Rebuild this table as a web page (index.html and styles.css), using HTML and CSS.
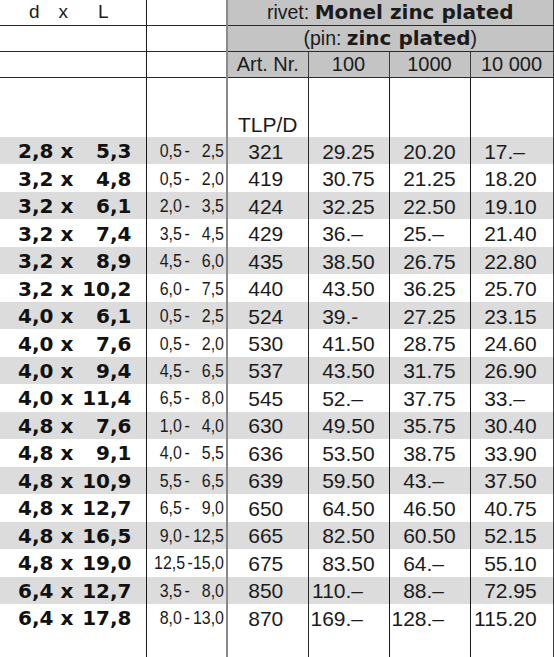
FILE: index.html
```html
<!DOCTYPE html>
<html>
<head>
<meta charset="utf-8">
<link rel="stylesheet" href="styles.css">
</head>
<body>
<table class="grid">
<colgroup>
<col class="w1"><col class="w2"><col class="w3"><col class="w4"><col class="w5"><col class="w6">
</colgroup>
<tr class="h1">
<td class="c1 dxl"><span>d</span><span class="gx">x</span><span class="gl">L</span></td>
<td class="c2"></td>
<td class="gray title" colspan="4">rivet: <b>Monel zinc plated</b></td>
</tr>
<tr class="h2">
<td class="c1"></td>
<td class="c2"></td>
<td class="gray sub" colspan="4">(pin: <b>zinc plated</b>)</td>
</tr>
<tr class="h3">
<td class="c1"></td>
<td class="c2"></td>
<td class="gray c3 hd">Art. Nr.</td>
<td class="gray c4 hd">100</td>
<td class="gray c5 hd">1000</td>
<td class="gray c6 hd">10 000</td>
</tr>
<tr class="tall">
<td class="c1"></td>
<td class="c2"></td>
<td class="c3 tlp">TLP/D</td>
<td class="c4"></td>
<td class="c5"></td>
<td class="c6"></td>
</tr>

<tr class="d z"><td class="c1"><div class="sz"><span>2,8 x</span><span>5,3</span></div></td><td class="c2"><div class="rg"><span>0,5</span><span class="ds">-</span><span class="hi">2,5</span></div></td><td class="c3 art">321</td><td class="c4 p"><span class="i">29</span>.25</td><td class="c5 p"><span class="i">20</span>.20</td><td class="c6 p"><span class="i">17</span>.–</td></tr>
<tr class="d"><td class="c1"><div class="sz"><span>3,2 x</span><span>4,8</span></div></td><td class="c2"><div class="rg"><span>0,5</span><span class="ds">-</span><span class="hi">2,0</span></div></td><td class="c3 art">419</td><td class="c4 p"><span class="i">30</span>.75</td><td class="c5 p"><span class="i">21</span>.25</td><td class="c6 p"><span class="i">18</span>.20</td></tr>
<tr class="d z"><td class="c1"><div class="sz"><span>3,2 x</span><span>6,1</span></div></td><td class="c2"><div class="rg"><span>2,0</span><span class="ds">-</span><span class="hi">3,5</span></div></td><td class="c3 art">424</td><td class="c4 p"><span class="i">32</span>.25</td><td class="c5 p"><span class="i">22</span>.50</td><td class="c6 p"><span class="i">19</span>.10</td></tr>
<tr class="d"><td class="c1"><div class="sz"><span>3,2 x</span><span>7,4</span></div></td><td class="c2"><div class="rg"><span>3,5</span><span class="ds">-</span><span class="hi">4,5</span></div></td><td class="c3 art">429</td><td class="c4 p"><span class="i">36</span>.–</td><td class="c5 p"><span class="i">25</span>.–</td><td class="c6 p"><span class="i">21</span>.40</td></tr>
<tr class="d z"><td class="c1"><div class="sz"><span>3,2 x</span><span>8,9</span></div></td><td class="c2"><div class="rg"><span>4,5</span><span class="ds">-</span><span class="hi">6,0</span></div></td><td class="c3 art">435</td><td class="c4 p"><span class="i">38</span>.50</td><td class="c5 p"><span class="i">26</span>.75</td><td class="c6 p"><span class="i">22</span>.80</td></tr>
<tr class="d"><td class="c1"><div class="sz"><span>3,2 x</span><span>10,2</span></div></td><td class="c2"><div class="rg"><span>6,0</span><span class="ds">-</span><span class="hi">7,5</span></div></td><td class="c3 art">440</td><td class="c4 p"><span class="i">43</span>.50</td><td class="c5 p"><span class="i">36</span>.25</td><td class="c6 p"><span class="i">25</span>.70</td></tr>
<tr class="d z"><td class="c1"><div class="sz"><span>4,0 x</span><span>6,1</span></div></td><td class="c2"><div class="rg"><span>0,5</span><span class="ds">-</span><span class="hi">2,5</span></div></td><td class="c3 art">524</td><td class="c4 p"><span class="i">39</span>.-</td><td class="c5 p"><span class="i">27</span>.25</td><td class="c6 p"><span class="i">23</span>.15</td></tr>
<tr class="d"><td class="c1"><div class="sz"><span>4,0 x</span><span>7,6</span></div></td><td class="c2"><div class="rg"><span>0,5</span><span class="ds">-</span><span class="hi">2,0</span></div></td><td class="c3 art">530</td><td class="c4 p"><span class="i">41</span>.50</td><td class="c5 p"><span class="i">28</span>.75</td><td class="c6 p"><span class="i">24</span>.60</td></tr>
<tr class="d z"><td class="c1"><div class="sz"><span>4,0 x</span><span>9,4</span></div></td><td class="c2"><div class="rg"><span>4,5</span><span class="ds">-</span><span class="hi">6,5</span></div></td><td class="c3 art">537</td><td class="c4 p"><span class="i">43</span>.50</td><td class="c5 p"><span class="i">31</span>.75</td><td class="c6 p"><span class="i">26</span>.90</td></tr>
<tr class="d"><td class="c1"><div class="sz"><span>4,0 x</span><span>11,4</span></div></td><td class="c2"><div class="rg"><span>6,5</span><span class="ds">-</span><span class="hi">8,0</span></div></td><td class="c3 art">545</td><td class="c4 p"><span class="i">52</span>.–</td><td class="c5 p"><span class="i">37</span>.75</td><td class="c6 p"><span class="i">33</span>.–</td></tr>
<tr class="d z"><td class="c1"><div class="sz"><span>4,8 x</span><span>7,6</span></div></td><td class="c2"><div class="rg"><span>1,0</span><span class="ds">-</span><span class="hi">4,0</span></div></td><td class="c3 art">630</td><td class="c4 p"><span class="i">49</span>.50</td><td class="c5 p"><span class="i">35</span>.75</td><td class="c6 p"><span class="i">30</span>.40</td></tr>
<tr class="d"><td class="c1"><div class="sz"><span>4,8 x</span><span>9,1</span></div></td><td class="c2"><div class="rg"><span>4,0</span><span class="ds">-</span><span class="hi">5,5</span></div></td><td class="c3 art">636</td><td class="c4 p"><span class="i">53</span>.50</td><td class="c5 p"><span class="i">38</span>.75</td><td class="c6 p"><span class="i">33</span>.90</td></tr>
<tr class="d z"><td class="c1"><div class="sz"><span>4,8 x</span><span>10,9</span></div></td><td class="c2"><div class="rg"><span>5,5</span><span class="ds">-</span><span class="hi">6,5</span></div></td><td class="c3 art">639</td><td class="c4 p"><span class="i">59</span>.50</td><td class="c5 p"><span class="i">43</span>.–</td><td class="c6 p"><span class="i">37</span>.50</td></tr>
<tr class="d"><td class="c1"><div class="sz"><span>4,8 x</span><span>12,7</span></div></td><td class="c2"><div class="rg"><span>6,5</span><span class="ds">-</span><span class="hi">9,0</span></div></td><td class="c3 art">650</td><td class="c4 p"><span class="i">64</span>.50</td><td class="c5 p"><span class="i">46</span>.50</td><td class="c6 p"><span class="i">40</span>.75</td></tr>
<tr class="d z"><td class="c1"><div class="sz"><span>4,8 x</span><span>16,5</span></div></td><td class="c2"><div class="rg"><span>9,0</span><span class="ds">-</span><span class="hi">12,5</span></div></td><td class="c3 art">665</td><td class="c4 p"><span class="i">82</span>.50</td><td class="c5 p"><span class="i">60</span>.50</td><td class="c6 p"><span class="i">52</span>.15</td></tr>
<tr class="d"><td class="c1"><div class="sz"><span>4,8 x</span><span>19,0</span></div></td><td class="c2"><div class="rg"><span>12,5</span><span class="ds">-</span><span class="hi">15,0</span></div></td><td class="c3 art">675</td><td class="c4 p"><span class="i">83</span>.50</td><td class="c5 p"><span class="i">64</span>.–</td><td class="c6 p"><span class="i">55</span>.10</td></tr>
<tr class="d z"><td class="c1"><div class="sz"><span>6,4 x</span><span>12,7</span></div></td><td class="c2"><div class="rg"><span>3,5</span><span class="ds">-</span><span class="hi">8,0</span></div></td><td class="c3 art">850</td><td class="c4 p"><span class="i">110</span>.–</td><td class="c5 p"><span class="i">88</span>.–</td><td class="c6 p"><span class="i">72</span>.95</td></tr>
<tr class="d"><td class="c1"><div class="sz"><span>6,4 x</span><span>17,8</span></div></td><td class="c2"><div class="rg"><span>8,0</span><span class="ds">-</span><span class="hi">13,0</span></div></td><td class="c3 art">870</td><td class="c4 p"><span class="i">169</span>.–</td><td class="c5 p"><span class="i">128</span>.–</td><td class="c6 p"><span class="i">115</span>.20</td></tr>
<tr class="end"><td class="c1"></td><td class="c2"></td><td class="c3"></td><td class="c4"></td><td class="c5"></td><td class="c6"></td></tr>
</table>
</body>
</html>
```
FILE: styles.css
```css
html, body {
  margin: 0;
  padding: 0;
  background: #ffffff;
}
body {
  font-family: "Liberation Sans", Arial, sans-serif;
  color: #1b1b1b;
  overflow: hidden;
}
.grid {
  border-collapse: collapse;
  table-layout: fixed;
  width: 553px;
}
.w1 { width: 146px; }
.w2 { width: 81px; }
.w3 { width: 81px; }
.w4 { width: 81px; }
.w5 { width: 81px; }
.w6 { width: 83px; }

td {
  padding: 0;
  white-space: nowrap;
  overflow: hidden;
}
.c1 { border-right: 1px solid #1a1a1a; }
.c2 { border-right: 2px solid #8a8a8a; }
.c3 { border-right: 1px solid #2a2a2a; }
.c4 { border-right: 1px solid #1a1a1a; }
.c5 { border-right: 1px solid #1a1a1a; }
.c6 { border-right: 1px solid #3a3a3a; }
.gray { border-right: 1px solid #3a3a3a; }

.h1 td, .h2 td, .h3 td { border-bottom: 1px solid #2a2a2a; }
.h1 { height: 25px; }
.h2 { height: 26px; }
.h3 { height: 26px; }
.tall { height: 60px; }
.d { height: 27.47px; }
.end { height: 40px; }

.gray { background: #c4c4c4; }
.z td { background: #dcdcdc; }

.dxl {
  font-size: 19px;
  padding-left: 29px;
  text-align: left;
}
.gx { margin-left: 19px; }
.gl { margin-left: 30px; }

.title, .sub {
  font-size: 19.5px;
  text-align: center;
}
.title b, .sub b {
  font-family: "DejaVu Sans", sans-serif;
  font-weight: bold;
  font-size: 20px;
}
.hd {
  font-size: 20px;
  text-align: center;
}
.tlp {
  font-size: 21px;
  text-align: center;
  vertical-align: bottom;
}

.sz {
  display: flex;
  justify-content: space-between;
  padding: 1px 14px 0 18px;
  font-family: "DejaVu Sans", sans-serif;
  font-weight: bold;
  font-size: 20px;
  color: #111111;
}
.rg {
  display: flex;
  justify-content: flex-end;
  padding-right: 3px;
  padding-top: 1px;
  font-size: 19px;
  transform: scaleX(0.84);
  transform-origin: right center;
}
.ds { margin-left: 3px; }
.hi {
  width: 45px;
  text-align: right;
}
.art {
  font-size: 21px;
  text-align: center;
  padding-right: 4px;
  padding-top: 2px;
}
.p {
  font-size: 21px;
  text-align: left;
  padding-top: 2px;
}
.i {
  display: inline-block;
  width: 37px;
  text-align: right;
}
```
